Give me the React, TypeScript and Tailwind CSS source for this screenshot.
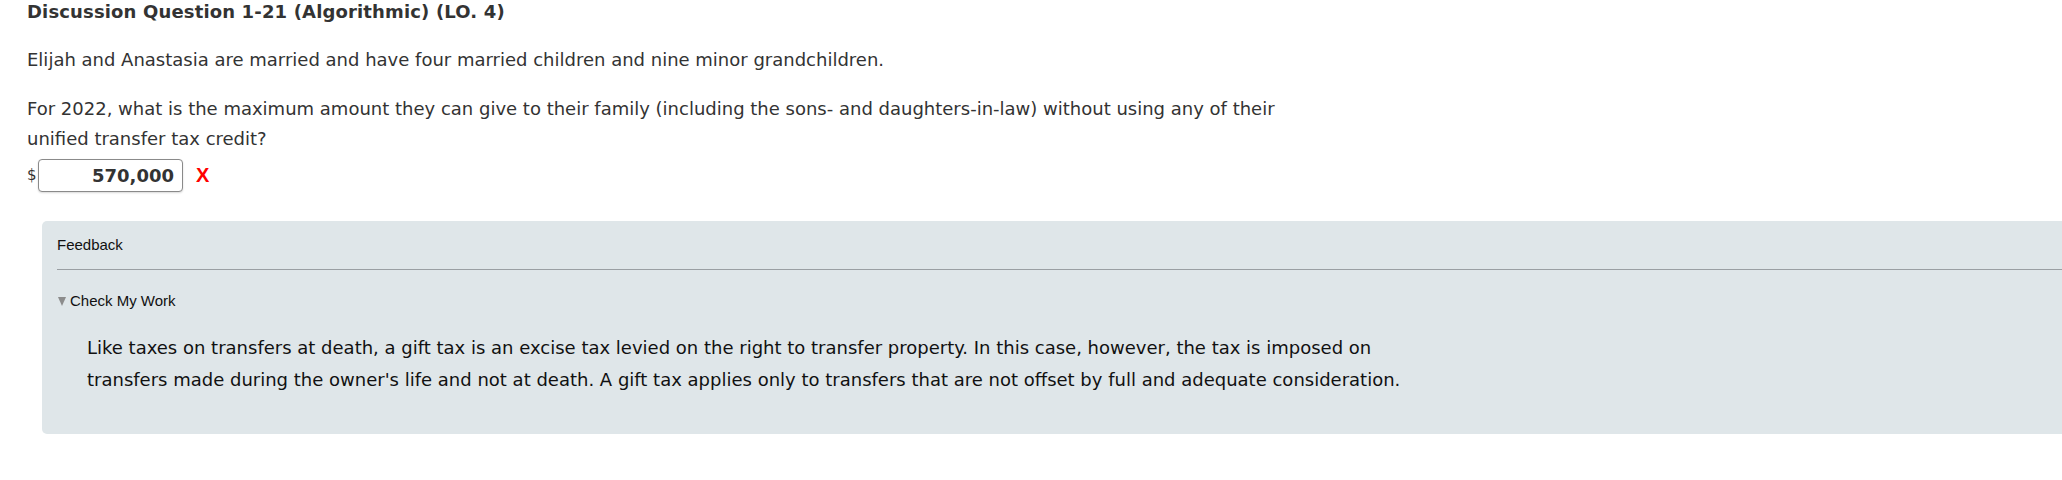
export default function App() {
  return (
    <div className="w-full min-h-[480px] bg-white pl-[27px] font-['DejaVu_Sans',Verdana,sans-serif] text-[#333] overflow-hidden">
      {/* Question */}
      <h1 className="text-[18px] leading-[24px] font-bold tracking-[0.15px]">Discussion Question 1-21 (Algorithmic) (LO. 4)</h1>

      <p className="mt-[21px] text-[18px] leading-[30px]">
        Elijah and Anastasia are married and have four married children and nine minor grandchildren.
      </p>

      <p className="mt-[19px] max-w-[1310px] text-[18px] leading-[30px]">
        For 2022, what is the maximum amount they can give to their family (including the sons- and daughters-in-law) without using any of their unified transfer tax credit?
      </p>

      {/* Answer */}
      <div className="mt-[4px] flex items-center h-[34px]">
        <span className="w-[11px] text-[15px] text-[#333]">$</span>
        <div className="w-[145px] h-[33px] rounded-[4px] border border-[#8a8a8a] bg-white flex items-center justify-end pr-[8px] text-[18px] font-bold shadow-[0_1px_2px_rgba(0,0,0,0.15)]">
          570,000
        </div>
        <span className="ml-[13px] font-['Liberation_Sans',Arial,sans-serif] text-[20px] font-bold text-[#f00]">X</span>
      </div>

      {/* Feedback panel */}
      <div className="mt-[29px] ml-[15px] rounded-l-[5px] bg-[#dfe6e9] pl-[15px] pt-[15px] pb-[38px]">
        <div className="font-['Liberation_Sans',Arial,sans-serif] text-[15px] leading-[18px] text-[#111]">Feedback</div>
        <div className="mt-[15px] h-px bg-[#9a9fa3]" />
        <div className="mt-[22px] flex items-center gap-[4px] font-['Liberation_Sans',Arial,sans-serif] text-[15px] leading-[18px] text-[#111]">
          <svg width="8" height="10" viewBox="0 0 8 10" className="ml-[1px]">
            <path d="M0 1 L8 1 L4 10 Z" fill="#8c8c8c" />
          </svg>
          <span>Check My Work</span>
        </div>
        <p className="mt-[22px] ml-[30px] max-w-[1350px] text-[18px] leading-[32px] text-[#111]">
          Like taxes on transfers at death, a gift tax is an excise tax levied on the right to transfer property. In this case, however, the tax is imposed on transfers made during the owner's life and not at death. A gift tax applies only to transfers that are not offset by full and adequate consideration.
        </p>
      </div>
    </div>
  );
}
